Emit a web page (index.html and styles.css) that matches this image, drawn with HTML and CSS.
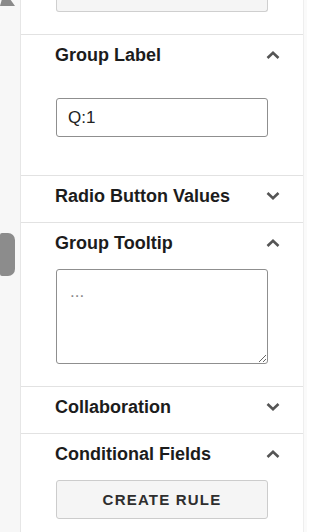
FILE: index.html
```html
<!DOCTYPE html>
<html>
<head>
<meta charset="utf-8">
<link rel="stylesheet" href="styles.css">
</head>
<body>
<div class="page">
  <aside class="gutter">
    <svg class="gutter-icon" width="16" height="7" viewBox="0 0 16 7"><polygon points="2,0 10,0 15,7 0,7" fill="#8a8a8a"/></svg>
    <div class="thumb"></div>
  </aside>
  <main class="panel">
    <section class="section top">
      <div class="ghost"></div>
    </section>
    <section class="section">
      <div class="head"><span class="title">Group Label</span><svg class="chev" width="14" height="8" viewBox="0 0 14 8"><path d="M1.5 7 L7 1.8 L12.5 7" fill="none" stroke="#555" stroke-width="2.6"/></svg></div>
      <div class="body label-body">
        <input class="field" type="text" value="Q:1">
      </div>
    </section>
    <section class="section">
      <div class="head"><span class="title">Radio Button Values</span><svg class="chev" width="14" height="8" viewBox="0 0 14 8"><path d="M1.5 1 L7 6.2 L12.5 1" fill="none" stroke="#555" stroke-width="2.6"/></svg></div>
    </section>
    <section class="section">
      <div class="head"><span class="title">Group Tooltip</span><svg class="chev" width="14" height="8" viewBox="0 0 14 8"><path d="M1.5 7 L7 1.8 L12.5 7" fill="none" stroke="#555" stroke-width="2.6"/></svg></div>
      <div class="body">
        <textarea class="field area" placeholder="..."></textarea>
      </div>
    </section>
    <section class="section">
      <div class="head"><span class="title">Collaboration</span><svg class="chev" width="14" height="8" viewBox="0 0 14 8"><path d="M1.5 1 L7 6.2 L12.5 1" fill="none" stroke="#555" stroke-width="2.6"/></svg></div>
    </section>
    <section class="section last">
      <div class="head"><span class="title">Conditional Fields</span><svg class="chev" width="14" height="8" viewBox="0 0 14 8"><path d="M1.5 7 L7 1.8 L12.5 7" fill="none" stroke="#555" stroke-width="2.6"/></svg></div>
      <div class="body">
        <button class="btn">CREATE RULE</button>
      </div>
    </section>
  </main>
  <div class="rail"></div>
</div>
</body>
</html>
```
FILE: styles.css
```css
* { box-sizing: border-box; }
html, body { margin: 0; padding: 0; background: #ffffff; }
body { font-family: "Liberation Sans", Arial, sans-serif; overflow: hidden; }
.page { display: flex; height: 532px; width: 307px; overflow: hidden; }
.gutter { position: relative; width: 21px; flex: none; background: #f7f7f7; border-right: 1px solid #e6e6e6; }
.gutter-icon { position: absolute; left: 0; top: -1px; }
.thumb { position: absolute; left: 0; top: 233px; width: 15px; height: 43px; background: #8c8c8c; border-radius: 2px 7px 7px 2px; }
.panel { width: 282px; flex: none; background: #fff; overflow: hidden; }
.rail { flex: 1; background: #fafafa; border-left: 1px solid #eeeeee; }
.section { border-bottom: 1px solid #e2e2e2; }
.section.last { border-bottom: none; }
.section.top { padding: 0 35px 22px 35px; }
.ghost { display: block; width: 212px; height: 12px; background: #f5f5f5; border: 1px solid #cfcfcf; border-top: none; border-radius: 0 0 3px 3px; }
.head { display: flex; align-items: center; justify-content: space-between; padding: 9px 23px 15px 34px; }
.title { font-size: 18px; line-height: 22px; font-weight: bold; color: #1c1c1c; }
.chev { display: block; }
.body { padding: 0 35px 22px 35px; }
.label-body { padding-top: 17px; padding-bottom: 38px; }
.field { display: block; width: 212px; height: 39px; border: 1px solid #8f8f8f; border-radius: 3px; font-family: "Liberation Sans", Arial, sans-serif; font-size: 17px; color: #222; padding: 0 11px; background: #fff; margin: 0; outline: none; }
.area { height: 95px; padding: 12px 13px; resize: vertical; line-height: 20px; }
.area::placeholder { color: #8a8a8a; }
.btn { display: block; width: 212px; height: 39px; margin: 0; border: 1px solid #cccccc; border-radius: 3px; background: #f5f5f5; font-family: "Liberation Sans", Arial, sans-serif; font-size: 15px; font-weight: bold; letter-spacing: 1.2px; color: #2e2e2e; }
```
